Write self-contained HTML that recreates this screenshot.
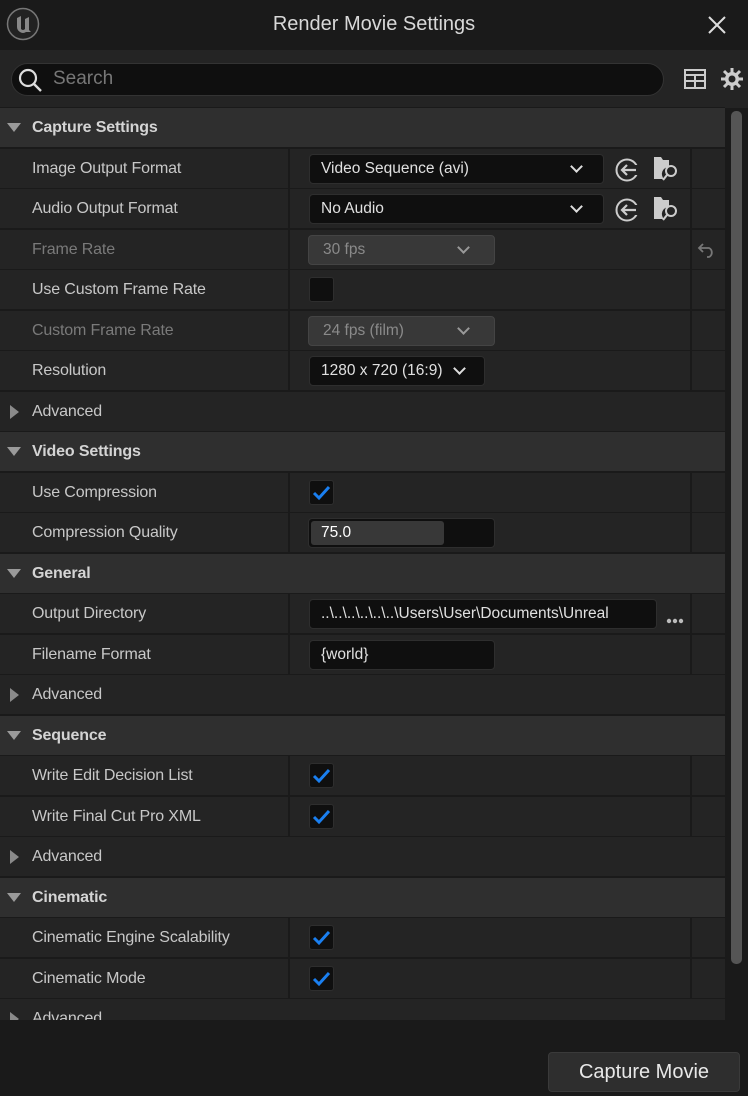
<!DOCTYPE html>
<html><head><meta charset="utf-8"><style>
*{margin:0;padding:0;box-sizing:border-box}
body{width:748px;height:1096px;background:#1a1a1a;position:relative;overflow:hidden;font-family:"Liberation Sans Narrow","Liberation Sans",sans-serif;color:#c8c8c8}
.abs{position:absolute}
.title{left:0;top:0;width:748px;height:50px;background:#1a1a1a}
.search{left:0;top:50px;width:748px;height:58px;background:#242424}
.panel{left:0;top:107px;width:725px;height:913px;overflow:hidden;background:#1a1a1a}
.row{position:absolute;left:0;width:725px;height:39px;background:#242424}
.h{background:#2f2f2f}
.lbl{position:absolute;left:32px;top:0;line-height:39px;font-size:16px;letter-spacing:-0.15px;color:#c8c8c8;white-space:nowrap}
.h .lbl{font-weight:bold;color:#d4d4d4}
.dis .lbl{color:#7a7a7a}
.tri{position:absolute;left:7px;top:15px;width:0;height:0;border-left:7px solid transparent;border-right:7px solid transparent;border-top:9px solid #9a9a9a}
.rtri{position:absolute;left:10px;top:13px;width:0;height:0;border-top:7px solid transparent;border-bottom:7px solid transparent;border-left:9px solid #8a8a8a}
.d1{position:absolute;left:288px;top:0;width:2px;height:39px;background:#1a1a1a}
.d2{position:absolute;left:690px;top:0;width:2px;height:39px;background:#1a1a1a}
.box{position:absolute;top:5px;height:30px;background:#0f0f0f;border:1px solid #2e2e2e;border-radius:4px;font-family:"Liberation Sans",sans-serif;font-size:15.5px;color:#e0e0e0;line-height:28px;padding-left:11px;white-space:nowrap;overflow:hidden}
.dbox{background:#383838;border-color:#444;color:#8a8a8a;padding-left:14px}
.chev{position:absolute;top:7px;width:9px;height:9px;border-right:2px solid #ddd;border-bottom:2px solid #ddd;transform:rotate(45deg)}
.dbox .chev{border-color:#999}
.cb{position:absolute;left:309px;top:7px;width:25px;height:25px;background:#0f0f0f;border:1px solid #2e2e2e;border-radius:3px}
</style></head><body>
<div class="abs title">
  <svg class="abs" style="left:6px;top:7px" width="34" height="34" viewBox="0 0 34 34"><circle cx="17" cy="17" r="15.5" fill="#222" stroke="#777" stroke-width="1.5"/><path d="M11 11 L15 9 L15 22 Q17 24 19 22 L19 12 L23 10 L23 23 L25 25 L20 25 Q17 27 14 25 Q11 23 11 20 Z" fill="#888"/></svg>
  <div class="abs" style="left:0;width:748px;top:-1px;line-height:50px;text-align:center;font-size:20px;color:#d8d8d8">Render Movie Settings</div>
  <svg class="abs" style="left:707px;top:15px" width="20" height="20"><path d="M2 2L18 18M18 2L2 18" stroke="#ddd" stroke-width="2"/></svg>
</div>
<div class="abs search">
  <div class="abs" style="left:11px;top:13px;width:653px;height:33px;background:#0f0f0f;border:1px solid #333;border-radius:17px"></div>
  <svg class="abs" style="left:16px;top:16px" width="28" height="28"><circle cx="12" cy="12" r="8" fill="none" stroke="#ddd" stroke-width="2.2"/><path d="M18 18L25 25" stroke="#ddd" stroke-width="2.4"/></svg>
  <div class="abs" style="left:53px;top:12px;line-height:33px;font-size:19px;color:#777">Search</div>
  <svg class="abs" style="left:683px;top:18px" width="24" height="22"><rect x="2" y="2" width="20" height="18" fill="none" stroke="#ccc" stroke-width="2"/><path d="M2 7H22M2 13H22M12 7V20" stroke="#ccc" stroke-width="2"/></svg>
  <svg class="abs" style="left:719px;top:16px" width="26" height="26" viewBox="0 0 26 26"><g stroke="#ccc" stroke-width="3"><path d="M13 2V24M2 13H24M5 5L21 21M21 5L5 21"/></g><circle cx="13" cy="13" r="7" fill="#ccc"/><circle cx="13" cy="13" r="3.5" fill="#242424"/></svg>
</div>
<div class="abs" style="left:731px;top:111px;width:11px;height:853px;background:#555;border-radius:5px"></div>
<div class="abs panel">
<div class="row h" style="top:1px"><div class="tri"></div><div class="lbl">Capture Settings</div></div>
<div class="row" style="top:41.5px"><div class="lbl">Image Output Format</div><div class="d1"></div><div class="d2"></div>
 <div class="box" style="left:309px;width:295px">Video Sequence (avi)<div class="chev" style="left:262px"></div></div>
 <svg class="abs" style="left:614px;top:8px" width="26" height="26"><circle cx="13" cy="13" r="10.5" fill="none" stroke="#ccc" stroke-width="2"/><rect x="19" y="8" width="6" height="10" fill="#242424"/><path d="M8 13H22M13 8L8 13L13 18" fill="none" stroke="#ccc" stroke-width="2.2"/></svg>
 <svg class="abs" style="left:653px;top:6px" width="26" height="28"><path d="M1 2H8L10 5H16V12A7 7 0 0 0 11 24H1Z" fill="#ccc"/><circle cx="18" cy="16" r="5" fill="none" stroke="#ccc" stroke-width="2"/><path d="M14 20L10 25" stroke="#ccc" stroke-width="2.2"/></svg>
</div>
<div class="row" style="top:82px"><div class="lbl">Audio Output Format</div><div class="d1"></div><div class="d2"></div>
 <div class="box" style="left:309px;width:295px">No Audio<div class="chev" style="left:262px"></div></div>
 <svg class="abs" style="left:614px;top:8px" width="26" height="26"><circle cx="13" cy="13" r="10.5" fill="none" stroke="#ccc" stroke-width="2"/><rect x="19" y="8" width="6" height="10" fill="#242424"/><path d="M8 13H22M13 8L8 13L13 18" fill="none" stroke="#ccc" stroke-width="2.2"/></svg>
 <svg class="abs" style="left:653px;top:6px" width="26" height="28"><path d="M1 2H8L10 5H16V12A7 7 0 0 0 11 24H1Z" fill="#ccc"/><circle cx="18" cy="16" r="5" fill="none" stroke="#ccc" stroke-width="2"/><path d="M14 20L10 25" stroke="#ccc" stroke-width="2.2"/></svg>
</div>
<div class="row dis" style="top:122.5px"><div class="lbl">Frame Rate</div><div class="d1"></div><div class="d2"></div>
 <div class="box dbox" style="left:308px;width:187px">30 fps<div class="chev" style="left:150px"></div></div>
 <svg class="abs" style="left:697px;top:11px" width="20" height="18"><path d="M6 3L2 7L6 11M2 7H12A5 5 0 0 1 12 16H10" fill="none" stroke="#777" stroke-width="1.8"/></svg>
</div>
<div class="row" style="top:163px"><div class="lbl">Use Custom Frame Rate</div><div class="d1"></div><div class="d2"></div><div class="cb"></div></div>
<div class="row dis" style="top:203.5px"><div class="lbl">Custom Frame Rate</div><div class="d1"></div><div class="d2"></div>
 <div class="box dbox" style="left:308px;width:187px">24 fps (film)<div class="chev" style="left:150px"></div></div></div>
<div class="row" style="top:244px"><div class="lbl">Resolution</div><div class="d1"></div><div class="d2"></div>
 <div class="box" style="left:309px;width:176px">1280 x 720 (16:9)<div class="chev" style="left:145px"></div></div></div>
<div class="row" style="top:284.5px"><div class="rtri"></div><div class="lbl">Advanced</div></div>
<div class="row h" style="top:325px"><div class="tri"></div><div class="lbl">Video Settings</div></div>
<div class="row" style="top:365.5px"><div class="lbl">Use Compression</div><div class="d1"></div><div class="d2"></div><div class="cb"><svg width="23" height="23"><path d="M4 12L9 17L19 6" fill="none" stroke="#1a7ff0" stroke-width="3"/></svg></div></div>
<div class="row" style="top:406px"><div class="lbl">Compression Quality</div><div class="d1"></div><div class="d2"></div>
 <div class="box" style="left:308px;width:187px;padding-left:0"><div class="abs" style="left:2px;top:2px;width:133px;height:24px;background:#383838;border-radius:3px"></div><span style="position:relative;left:12px;color:#fff">75.0</span></div></div>
<div class="row h" style="top:446.5px"><div class="tri"></div><div class="lbl">General</div></div>
<div class="row" style="top:487px"><div class="lbl">Output Directory</div><div class="d1"></div><div class="d2"></div>
 <div class="box" style="left:309px;width:348px">..\..\..\..\..\..\Users\User\Documents\Unreal</div>
 <div class="abs" style="left:666px;top:17px"><svg width="18" height="6"><circle cx="3" cy="3" r="2.2" fill="#bbb"/><circle cx="9" cy="3" r="2.2" fill="#bbb"/><circle cx="15" cy="3" r="2.2" fill="#bbb"/></svg></div></div>
<div class="row" style="top:527.5px"><div class="lbl">Filename Format</div><div class="d1"></div><div class="d2"></div>
 <div class="box" style="left:309px;width:186px">{world}</div></div>
<div class="row" style="top:568px"><div class="rtri"></div><div class="lbl">Advanced</div></div>
<div class="row h" style="top:608.5px"><div class="tri"></div><div class="lbl">Sequence</div></div>
<div class="row" style="top:649px"><div class="lbl">Write Edit Decision List</div><div class="d1"></div><div class="d2"></div><div class="cb"><svg width="23" height="23"><path d="M4 12L9 17L19 6" fill="none" stroke="#1a7ff0" stroke-width="3"/></svg></div></div>
<div class="row" style="top:689.5px"><div class="lbl">Write Final Cut Pro XML</div><div class="d1"></div><div class="d2"></div><div class="cb"><svg width="23" height="23"><path d="M4 12L9 17L19 6" fill="none" stroke="#1a7ff0" stroke-width="3"/></svg></div></div>
<div class="row" style="top:730px"><div class="rtri"></div><div class="lbl">Advanced</div></div>
<div class="row h" style="top:770.5px"><div class="tri"></div><div class="lbl">Cinematic</div></div>
<div class="row" style="top:811px"><div class="lbl">Cinematic Engine Scalability</div><div class="d1"></div><div class="d2"></div><div class="cb"><svg width="23" height="23"><path d="M4 12L9 17L19 6" fill="none" stroke="#1a7ff0" stroke-width="3"/></svg></div></div>
<div class="row" style="top:851.5px"><div class="lbl">Cinematic Mode</div><div class="d1"></div><div class="d2"></div><div class="cb"><svg width="23" height="23"><path d="M4 12L9 17L19 6" fill="none" stroke="#1a7ff0" stroke-width="3"/></svg></div></div>
<div class="row" style="top:892px"><div class="rtri"></div><div class="lbl">Advanced</div></div>
</div>
<div class="abs" style="left:548px;top:1052px;width:192px;height:40px;background:#2e2e2e;border:1px solid #3a3a3a;border-radius:4px;line-height:38px;text-align:center;font-size:20px;color:#e8e8e8">Capture Movie</div>
</body></html>
